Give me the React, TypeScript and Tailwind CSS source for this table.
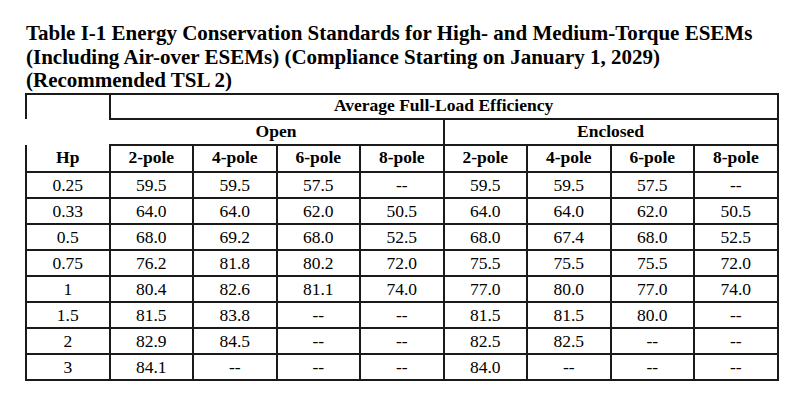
import React from "react";

const rows: string[][] = [
  ["0.25", "59.5", "59.5", "57.5", "--", "59.5", "59.5", "57.5", "--"],
  ["0.33", "64.0", "64.0", "62.0", "50.5", "64.0", "64.0", "62.0", "50.5"],
  ["0.5", "68.0", "69.2", "68.0", "52.5", "68.0", "67.4", "68.0", "52.5"],
  ["0.75", "76.2", "81.8", "80.2", "72.0", "75.5", "75.5", "75.5", "72.0"],
  ["1", "80.4", "82.6", "81.1", "74.0", "77.0", "80.0", "77.0", "74.0"],
  ["1.5", "81.5", "83.8", "--", "--", "81.5", "81.5", "80.0", "--"],
  ["2", "82.9", "84.5", "--", "--", "82.5", "82.5", "--", "--"],
  ["3", "84.1", "--", "--", "--", "84.0", "--", "--", "--"],
];

const poles = ["2-pole", "4-pole", "6-pole", "8-pole", "2-pole", "4-pole", "6-pole", "8-pole"];

export default function App() {
  const cell = "border-2 border-[#1a1a1a] text-center p-0 align-middle";
  return (
    <div
      className="w-[800px] h-[402px] bg-white text-black overflow-hidden pl-[25px] pt-[22px]"
      style={{ fontFamily: '"Liberation Serif", "Times New Roman", serif' }}
    >
      <div className="text-[21px] leading-[23.5px] font-bold whitespace-nowrap pl-px">
        Table I-1 Energy Conservation Standards for High- and Medium-Torque ESEMs
        <br />
        (Including Air-over ESEMs) (Compliance Starting on January 1, 2029)
        <br />
        (Recommended TSL 2)
      </div>
      <table className="border-collapse table-fixed w-[752px] text-[17.5px] leading-none">
        <colgroup>
          {Array.from({ length: 9 }).map((_, i) => (
            <col key={i} className="w-[83.5px]" />
          ))}
        </colgroup>
        <tbody>
          <tr className="h-[25px]">
            <td className={`${cell} border-b-0`}></td>
            <td className={`${cell} font-bold`} colSpan={8}>
              Average Full-Load Efficiency
            </td>
          </tr>
          <tr className="h-[26px]">
            <td className="border-hidden p-0"></td>
            <td className={`${cell} font-bold`} colSpan={4}>
              Open
            </td>
            <td className={`${cell} font-bold`} colSpan={4}>
              Enclosed
            </td>
          </tr>
          <tr className="h-[27px]">
            <td className={`${cell} font-bold border-t-0`}>Hp</td>
            {poles.map((p, i) => (
              <td key={i} className={`${cell} font-bold`}>
                {p}
              </td>
            ))}
          </tr>
          {rows.map((r, i) => (
            <tr key={i} className="h-[26px]">
              {r.map((v, j) => (
                <td key={j} className={`${cell} pt-[2px]`}>
                  {v}
                </td>
              ))}
            </tr>
          ))}
        </tbody>
      </table>
    </div>
  );
}
